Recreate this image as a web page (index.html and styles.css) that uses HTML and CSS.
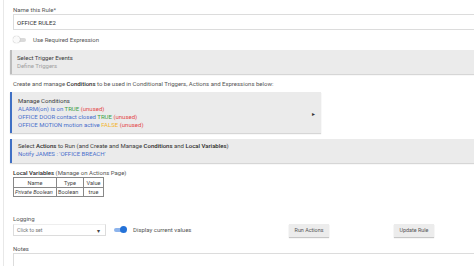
FILE: index.html
```html
<!DOCTYPE html>
<html lang="en">
<head>
    <meta charset="UTF-8">
    <meta name="viewport" content="width=device-width, initial-scale=1.0">
    <title>Rule Machine</title>
    <link rel="stylesheet" href="styles.css">
</head>
<body>
    <div class="page">
        <!-- Rule name -->
        <div class="field-label">Name this Rule*</div>
        <div class="text-input">OFFICE RULE2</div>

        <div class="switch-row">
            <span class="switch"><span class="knob"></span></span>
            <span class="switch-label">Use Required Expression</span>
        </div>

        <!-- Trigger section -->
        <div class="section">
            <div>Select Trigger Events</div>
            <div class="muted">Define Triggers</div>
        </div>

        <p class="intro">Create and manage <b>Conditions</b> to be used in Conditional Triggers, Actions and Expressions below:</p>

        <!-- Conditions -->
        <div class="section blue conditions">
            <div>Manage Conditions</div>
            <div class="link">ALARM(on) is on <span class="ok">TRUE</span> <span class="bad">(unused)</span></div>
            <div class="link">OFFICE DOOR contact closed <span class="ok">TRUE</span> <span class="bad">(unused)</span></div>
            <div class="link">OFFICE MOTION motion active <span class="warn">FALSE</span> <span class="bad">(unused)</span></div>
            <span class="arrow">&#9656;</span>
        </div>

        <!-- Actions -->
        <div class="section blue actions">
            <div>Select <b>Actions</b> to Run (and Create and Manage <b>Conditions</b> and <b>Local Variables</b>)</div>
            <div class="link">Notify JAMES : 'OFFICE BREACH'</div>
        </div>

        <div class="vars-title"><b>Local Variables</b> (Manage on Actions Page)</div>
        <table class="vars">
            <tr><th class="c-name">Name</th><th class="c-type">Type</th><th class="c-value">Value</th></tr>
            <tr><td><i>Private Boolean</i></td><td>Boolean</td><td class="center">true</td></tr>
        </table>

        <div class="field-label logging">Logging</div>
        <div class="controls">
            <div class="select">Click to set <span class="caret">&#9662;</span></div>
            <div class="switch-row inline">
                <span class="switch on"><span class="knob"></span></span>
                <span class="switch-label">Display current values</span>
            </div>
            <button class="btn">Run Actions</button>
            <span></span>
            <button class="btn">Update Rule</button>
        </div>

        <div class="field-label notes">Notes</div>
        <div class="textarea"></div>
    </div>
</body>
</html>
```
FILE: styles.css
```css
:root {
    --text: #444;
    --muted: #a0a0a0;
    --box-bg: #ebebeb;
    --blue: #4a6fcc;
    --line: #dcdcdc;
}

body {
    margin: 0;
    font-family: Roboto, 'Noto Sans', sans-serif;
    font-size: 6px;
    line-height: 8px;
    color: var(--text);
    background: #fff;
    overflow: hidden;
}

.page {
    margin-left: 3px;
    border-left: 1px solid #e8e8e8;
    padding: 6px 0 0 6px;
    height: 266px;
    box-sizing: border-box;
}

b {
    font-weight: 500;
    color: #2a2a2a;
}

.field-label {
    margin-left: 3px;
    color: #555;
}

.text-input {
    margin-left: 3px;
    height: 16px;
    line-height: 15px;
    border: 1px solid var(--line);
    border-right: none;
    box-sizing: border-box;
    padding-left: 3px;
    color: #333;
}

/* toggle switches */
.switch-row {
    display: flex;
    align-items: center;
    height: 12px;
    margin: 4px 0 0 3px;
}

.switch-row.inline {
    margin: 0 0 0 7px;
}

.switch {
    position: relative;
    width: 12px;
    height: 4px;
    border-radius: 2px;
    background: #dadada;
    margin: 0 1px;
}

.switch .knob {
    position: absolute;
    top: -2px;
    left: -1px;
    width: 7px;
    height: 7px;
    border-radius: 50%;
    background: #fafafa;
    box-shadow: 0 0 1px rgba(0, 0, 0, 0.4);
}

.switch.on {
    background: #8db4ec;
}

.switch.on .knob {
    left: auto;
    right: -1px;
    background: #2472d8;
    box-shadow: none;
}

.switch-label {
    margin-left: 6px;
    color: #555;
}

/* grey panels */
.section {
    position: relative;
    margin-top: 4px;
    padding: 4px 0 4px 5px;
    background: var(--box-bg);
    border-left: 2px solid #bcbcbc;
    box-shadow: 0 1px 1px rgba(0, 0, 0, 0.16);
    color: #3a3a3a;
}

.section.blue {
    border-left-color: #4070c4;
}

.muted {
    color: var(--muted);
}

.intro {
    margin: 6px 0 0 3px;
    color: #555;
}

.conditions {
    width: 303px;
    padding: 5px 0 4px 6px;
}

.arrow {
    position: absolute;
    right: 6px;
    top: 18px;
    font-size: 6px;
    color: #333;
}

.actions {
    margin-top: 6px;
    padding: 3px 0 5px 6px;
}

.link {
    color: var(--blue);
}

.ok {
    color: #3a9f45;
}

.bad {
    color: #e44848;
}

.warn {
    color: #f3b52c;
}

.vars-title {
    margin: 6px 0 0 3px;
    color: #555;
}

.vars {
    margin-left: 3px;
    border-collapse: collapse;
    border: 1px solid #666;
    font-size: 5.6px;
    line-height: 8px;
}

.vars th,
.vars td {
    border: 1px solid #888;
    padding: 0 1px;
    font-weight: normal;
    color: #444;
}

.vars th {
    text-align: center;
    height: 9px;
}

.vars td {
    height: 8px;
}

.c-name {
    width: 40px;
}

.c-type {
    width: 24px;
}

.c-value {
    width: 17px;
}

.center {
    text-align: center;
}

.logging {
    margin-top: 18px;
}

/* logging row */
.controls {
    display: grid;
    grid-template-columns: 93px 183px 40px 65px 40px;
    align-items: center;
    margin-left: 3px;
    height: 14px;
}

.select {
    position: relative;
    height: 12px;
    line-height: 11px;
    box-sizing: border-box;
    border: 1px solid var(--line);
    border-top-color: #eee;
    padding-left: 3px;
    color: #777;
    font-size: 5.2px;
}

.caret {
    position: absolute;
    right: 5px;
    top: 0;
    font-size: 6px;
    color: #444;
}

.btn {
    height: 13px;
    padding: 0;
    border: none;
    background: #ececec;
    box-shadow: 0 1px 1px rgba(0, 0, 0, 0.22);
    font-family: inherit;
    font-size: 5.4px;
    color: #555;
    cursor: pointer;
}

.notes {
    margin-top: 8px;
}

.textarea {
    margin-left: 3px;
    height: 20px;
    border-top: 1px solid var(--line);
    border-left: 1px solid var(--line);
}
```
